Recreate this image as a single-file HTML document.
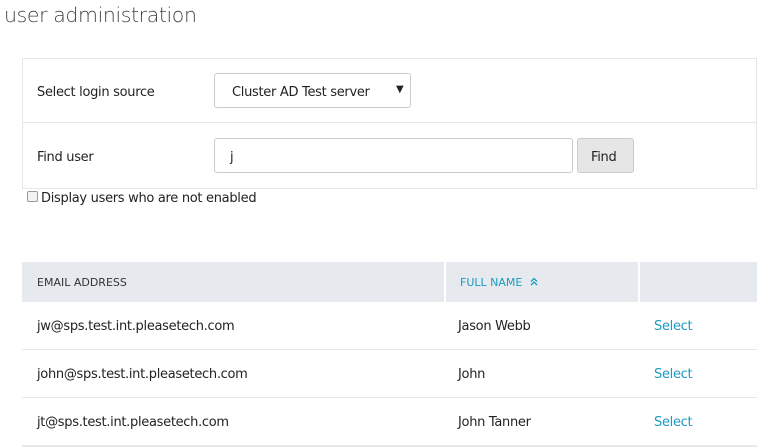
<!DOCTYPE html>
<html><head><style>
body{margin:0;width:757px;height:447px;background:#fff;font-family:"DejaVu Sans","Liberation Sans",sans-serif;color:#222;position:relative;overflow:hidden}
.a{position:absolute}
.t{font-size:13px;letter-spacing:-0.3px}
</style></head><body>
<div class="a" style="left:4px;top:3px;font-size:20.5px;font-weight:300;color:#444;letter-spacing:-0.4px;font-family:'DejaVu Sans',sans-serif">user administration</div>
<div class="a" style="left:22px;top:58px;width:733px;height:129px;border:1px solid #e6e6e6"></div>
<div class="a" style="left:23px;top:122px;width:733px;height:1px;background:#e6e6e6"></div>
<div class="a t" style="left:37px;top:85px">Select login source</div>
<div class="a" style="left:214px;top:73px;width:195px;height:33px;border:1px solid #ccc;border-radius:3px"></div>
<div class="a t" style="left:232px;top:85px">Cluster AD Test server</div>
<div class="a" style="left:396px;top:84px;font-size:10px">▼</div>
<div class="a t" style="left:37px;top:150px">Find user</div>
<div class="a" style="left:214px;top:138px;width:357px;height:33px;border:1px solid #ccc;border-radius:3px"></div>
<div class="a t" style="left:230px;top:150px">j</div>
<div class="a" style="left:577px;top:138px;width:55px;height:33px;border:1px solid #ccc;border-radius:3px;background:#e6e6e6"></div>
<div class="a t" style="left:591px;top:150px">Find</div>
<div class="a" style="left:27px;top:191px;width:9px;height:9px;border:1px solid #999;border-radius:2px;background:#f4f4f4"></div>
<div class="a t" style="left:41px;top:191px">Display users who are not enabled</div>
<div class="a" style="left:22px;top:262px;width:735px;height:40px;background:#e6eaee"></div>
<div class="a" style="left:444px;top:262px;width:2px;height:40px;background:#fff"></div>
<div class="a" style="left:638px;top:262px;width:2px;height:40px;background:#fff"></div>
<div class="a" style="left:37px;top:276px;font-size:11px;color:#333">EMAIL ADDRESS</div>
<div class="a" style="left:460px;top:276px;font-size:11px;color:#1a9bc4">FULL NAME</div>
<svg class="a" style="left:530px;top:277px" width="8" height="9" viewBox="0 0 8 9"><path d="M1 4.5L4 1.5L7 4.5M1 8L4 5L7 8" fill="none" stroke="#1a9bc4" stroke-width="1.3"/></svg>
<div class="a" style="left:22px;top:349px;width:735px;height:1px;background:#e8e8e8"></div>
<div class="a" style="left:22px;top:397px;width:735px;height:1px;background:#e8e8e8"></div>
<div class="a" style="left:22px;top:445px;width:735px;height:2px;background:#e8e8e8"></div>
<div class="a t" style="left:37px;top:319px">jw@sps.test.int.pleasetech.com</div>
<div class="a t" style="left:458px;top:319px">Jason Webb</div>
<div class="a t" style="left:654px;top:319px;color:#1a9bc4">Select</div>
<div class="a t" style="left:37px;top:367px">john@sps.test.int.pleasetech.com</div>
<div class="a t" style="left:458px;top:367px">John</div>
<div class="a t" style="left:654px;top:367px;color:#1a9bc4">Select</div>
<div class="a t" style="left:37px;top:415px">jt@sps.test.int.pleasetech.com</div>
<div class="a t" style="left:458px;top:415px">John Tanner</div>
<div class="a t" style="left:654px;top:415px;color:#1a9bc4">Select</div>
</body></html>
